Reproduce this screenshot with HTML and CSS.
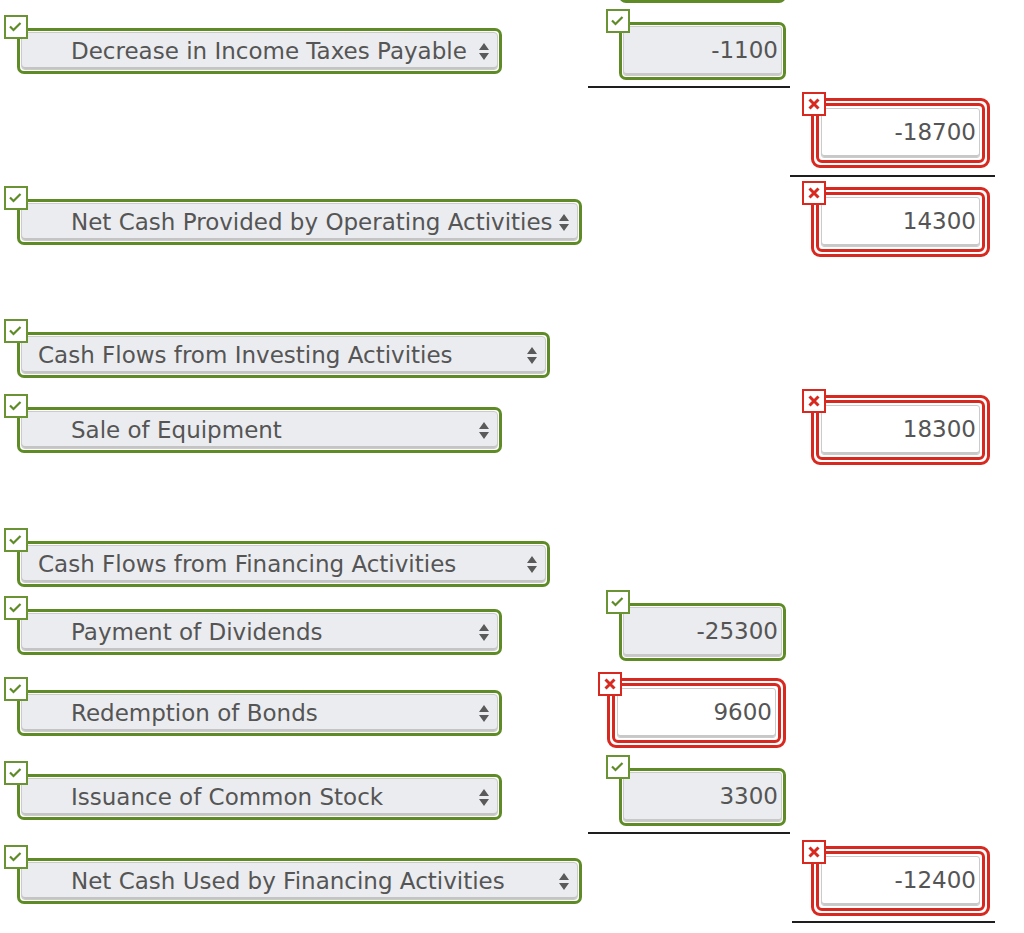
FILE: index.html
```html
<!DOCTYPE html>
<html>
<head>
<meta charset="utf-8">
<link rel="stylesheet" href="styles.css">
</head>
<body>
<div class="sheet">

  <div class="row r0">
    <div class="c1"></div>
    <div class="c2"><div class="box good"><div class="inp"></div></div></div>
    <div class="c3"></div>
  </div>

  <div class="row r1">
    <div class="c1">
      <div class="sel-box w485">
        <span class="mark ok"><svg viewBox="0 0 24 24"><polyline points="6,11.5 9.5,15 16.5,8"/></svg></span>
        <div class="sel sub"><span>Decrease in Income Taxes Payable</span><svg class="arr" viewBox="0 0 10 17"><path d="M0 7 L5 0 L10 7Z M0 10 L10 10 L5 17Z"/></svg></div>
      </div>
    </div>
    <div class="c2">
      <div class="box good">
        <span class="mark ok"><svg viewBox="0 0 24 24"><polyline points="6,11.5 9.5,15 16.5,8"/></svg></span>
        <div class="inp">-1100</div>
      </div>
    </div>
    <div class="c3"></div>
  </div>

  <div class="rule rl1"><span class="line l2"></span></div>

  <div class="row r2">
    <div class="c1"></div>
    <div class="c2"></div>
    <div class="c3">
      <div class="box bad">
        <span class="mark no"><svg viewBox="0 0 24 24"><path d="M7.5 7.5 L16.5 16.5 M16.5 7.5 L7.5 16.5"/></svg></span>
        <div class="ring"><div class="inp">-18700</div></div>
      </div>
    </div>
  </div>

  <div class="rule rl2"><span class="line l3"></span></div>

  <div class="row r3">
    <div class="c1">
      <div class="sel-box w565">
        <span class="mark ok"><svg viewBox="0 0 24 24"><polyline points="6,11.5 9.5,15 16.5,8"/></svg></span>
        <div class="sel sub"><span>Net Cash Provided by Operating Activities</span><svg class="arr" viewBox="0 0 10 17"><path d="M0 7 L5 0 L10 7Z M0 10 L10 10 L5 17Z"/></svg></div>
      </div>
    </div>
    <div class="c2"></div>
    <div class="c3">
      <div class="box bad">
        <span class="mark no"><svg viewBox="0 0 24 24"><path d="M7.5 7.5 L16.5 16.5 M16.5 7.5 L7.5 16.5"/></svg></span>
        <div class="ring"><div class="inp">14300</div></div>
      </div>
    </div>
  </div>

  <div class="row r4">
    <div class="c1">
      <div class="sel-box w533">
        <span class="mark ok"><svg viewBox="0 0 24 24"><polyline points="6,11.5 9.5,15 16.5,8"/></svg></span>
        <div class="sel"><span>Cash Flows from Investing Activities</span><svg class="arr" viewBox="0 0 10 17"><path d="M0 7 L5 0 L10 7Z M0 10 L10 10 L5 17Z"/></svg></div>
      </div>
    </div>
    <div class="c2"></div>
    <div class="c3"></div>
  </div>

  <div class="row r5">
    <div class="c1">
      <div class="sel-box w485">
        <span class="mark ok"><svg viewBox="0 0 24 24"><polyline points="6,11.5 9.5,15 16.5,8"/></svg></span>
        <div class="sel sub"><span>Sale of Equipment</span><svg class="arr" viewBox="0 0 10 17"><path d="M0 7 L5 0 L10 7Z M0 10 L10 10 L5 17Z"/></svg></div>
      </div>
    </div>
    <div class="c2"></div>
    <div class="c3">
      <div class="box bad">
        <span class="mark no"><svg viewBox="0 0 24 24"><path d="M7.5 7.5 L16.5 16.5 M16.5 7.5 L7.5 16.5"/></svg></span>
        <div class="ring"><div class="inp">18300</div></div>
      </div>
    </div>
  </div>

  <div class="row r6">
    <div class="c1">
      <div class="sel-box w533">
        <span class="mark ok"><svg viewBox="0 0 24 24"><polyline points="6,11.5 9.5,15 16.5,8"/></svg></span>
        <div class="sel"><span>Cash Flows from Financing Activities</span><svg class="arr" viewBox="0 0 10 17"><path d="M0 7 L5 0 L10 7Z M0 10 L10 10 L5 17Z"/></svg></div>
      </div>
    </div>
    <div class="c2"></div>
    <div class="c3"></div>
  </div>

  <div class="row r7">
    <div class="c1">
      <div class="sel-box w485">
        <span class="mark ok"><svg viewBox="0 0 24 24"><polyline points="6,11.5 9.5,15 16.5,8"/></svg></span>
        <div class="sel sub"><span>Payment of Dividends</span><svg class="arr" viewBox="0 0 10 17"><path d="M0 7 L5 0 L10 7Z M0 10 L10 10 L5 17Z"/></svg></div>
      </div>
    </div>
    <div class="c2">
      <div class="box good">
        <span class="mark ok"><svg viewBox="0 0 24 24"><polyline points="6,11.5 9.5,15 16.5,8"/></svg></span>
        <div class="inp">-25300</div>
      </div>
    </div>
    <div class="c3"></div>
  </div>

  <div class="row r8">
    <div class="c1">
      <div class="sel-box w485">
        <span class="mark ok"><svg viewBox="0 0 24 24"><polyline points="6,11.5 9.5,15 16.5,8"/></svg></span>
        <div class="sel sub"><span>Redemption of Bonds</span><svg class="arr" viewBox="0 0 10 17"><path d="M0 7 L5 0 L10 7Z M0 10 L10 10 L5 17Z"/></svg></div>
      </div>
    </div>
    <div class="c2">
      <div class="box bad">
        <span class="mark no"><svg viewBox="0 0 24 24"><path d="M7.5 7.5 L16.5 16.5 M16.5 7.5 L7.5 16.5"/></svg></span>
        <div class="ring"><div class="inp">9600</div></div>
      </div>
    </div>
    <div class="c3"></div>
  </div>

  <div class="row r9">
    <div class="c1">
      <div class="sel-box w485">
        <span class="mark ok"><svg viewBox="0 0 24 24"><polyline points="6,11.5 9.5,15 16.5,8"/></svg></span>
        <div class="sel sub"><span>Issuance of Common Stock</span><svg class="arr" viewBox="0 0 10 17"><path d="M0 7 L5 0 L10 7Z M0 10 L10 10 L5 17Z"/></svg></div>
      </div>
    </div>
    <div class="c2">
      <div class="box good">
        <span class="mark ok"><svg viewBox="0 0 24 24"><polyline points="6,11.5 9.5,15 16.5,8"/></svg></span>
        <div class="inp">3300</div>
      </div>
    </div>
    <div class="c3"></div>
  </div>

  <div class="rule rl3"><span class="line l2"></span></div>

  <div class="row r10">
    <div class="c1">
      <div class="sel-box w565">
        <span class="mark ok"><svg viewBox="0 0 24 24"><polyline points="6,11.5 9.5,15 16.5,8"/></svg></span>
        <div class="sel sub"><span>Net Cash Used by Financing Activities</span><svg class="arr" viewBox="0 0 10 17"><path d="M0 7 L5 0 L10 7Z M0 10 L10 10 L5 17Z"/></svg></div>
      </div>
    </div>
    <div class="c2"></div>
    <div class="c3">
      <div class="box bad">
        <span class="mark no"><svg viewBox="0 0 24 24"><path d="M7.5 7.5 L16.5 16.5 M16.5 7.5 L7.5 16.5"/></svg></span>
        <div class="ring"><div class="inp">-12400</div></div>
      </div>
    </div>
  </div>

  <div class="rule rl4"><span class="line l3 shift"></span></div>

</div>
</body>
</html>
```

FILE: styles.css
```css
* { box-sizing: border-box; }

html, body {
  margin: 0;
  padding: 0;
  background: #ffffff;
  overflow: hidden;
}

body {
  font-family: "DejaVu Sans", Verdana, sans-serif;
  font-size: 23px;
  color: #555555;
}

.sheet {
  width: 1024px;
}

.row {
  display: grid;
  grid-template-columns: 588px 202px 205px;
  grid-template-rows: 60px;
  height: 60px;
  align-items: center;
}

.c1 { display: flex; align-items: center; }
.c2 { justify-self: end; margin-right: 4px; }
.c3 { justify-self: end; margin-right: 5px; }

.r0 { margin-top: -56px; }
.r1 { margin-top: 17px; }
.r2 { margin-top: 15px; }
.r3 { margin-top: 15px; }
.r4 { margin-top: 73px; }
.r5 { margin-top: 15px; }
.r6 { margin-top: 74px; }
.r7 { margin-top: 8px; }
.r8 { margin-top: 21px; }
.r9 { margin-top: 24px; }
.r10 { margin-top: 17px; }

.rule {
  display: grid;
  grid-template-columns: 588px 202px 205px;
  height: 2px;
}
.rl1 { margin-top: 5px; }
.rl2 { margin-top: 12px; }
.rl3 { margin-top: 5px; }
.rl4 { margin-top: 10px; }

.line { display: block; height: 2px; background: #1e1e1e; }
.line.l2 { grid-column: 2; }
.line.l3 { grid-column: 3; }
.line.shift { margin-left: 2px; }

/* select boxes */
.sel-box {
  position: relative;
  margin-left: 17px;
  height: 46px;
  border: 3px solid #5e8b26;
  border-radius: 7px;
  padding: 1px;
  background: #fff;
}
.w485 { width: 485px; }
.w533 { width: 533px; }
.w565 { width: 565px; }

.sel {
  height: 100%;
  display: flex;
  align-items: center;
  justify-content: space-between;
  padding: 0 8px 0 16px;
  background: #ebecef;
  border: 1px solid #cbcbcb;
  border-radius: 4px;
  box-shadow: inset 0 -2px 0 #c4c4c4;
  white-space: nowrap;
}
.sel.sub { padding-left: 49px; }

.arr {
  width: 10px;
  height: 17px;
  fill: #5a5a5a;
  flex: none;
}

/* answer boxes */
.box {
  position: relative;
  border-radius: 7px;
  background: #fff;
}
.box.good {
  width: 167px;
  height: 58px;
  border: 3px solid #5e8b26;
  padding: 1px;
}
.box.good .inp { background: #ebecef; }

.box.bad {
  width: 179px;
  height: 70px;
  border: 3px solid #d7291f;
  border-radius: 9px;
  padding: 2px;
}
.ring {
  height: 100%;
  border: 3px solid #d7291f;
  border-radius: 6px;
  padding: 2px;
  background: #fff;
}
.box.bad .inp { background: #fff; }

.inp {
  height: 100%;
  display: flex;
  align-items: center;
  justify-content: flex-end;
  padding: 0 3px 2px 0;
  border: 1px solid #cbcbcb;
  border-radius: 3px;
  box-shadow: inset 0 -2px 0 #c8c8c8;
  line-height: 1;
}

/* check / cross badges */
.mark {
  position: absolute;
  width: 24px;
  height: 24px;
  background: #fff;
  border: 2px solid;
  z-index: 2;
}
.mark svg {
  position: absolute;
  left: -2px;
  top: -2px;
  width: 24px;
  height: 24px;
  fill: none;
}
.mark.ok { border-color: #6a9433; }
.mark.ok svg { stroke: #5e8b26; stroke-width: 2.2; }
.mark.no { border-color: #d7291f; }
.mark.no svg { stroke: #d7291f; stroke-width: 3; }

.sel-box .mark,
.box.good .mark { left: -16px; top: -16px; }
.box.bad .mark { left: -12px; top: -9px; }
```
